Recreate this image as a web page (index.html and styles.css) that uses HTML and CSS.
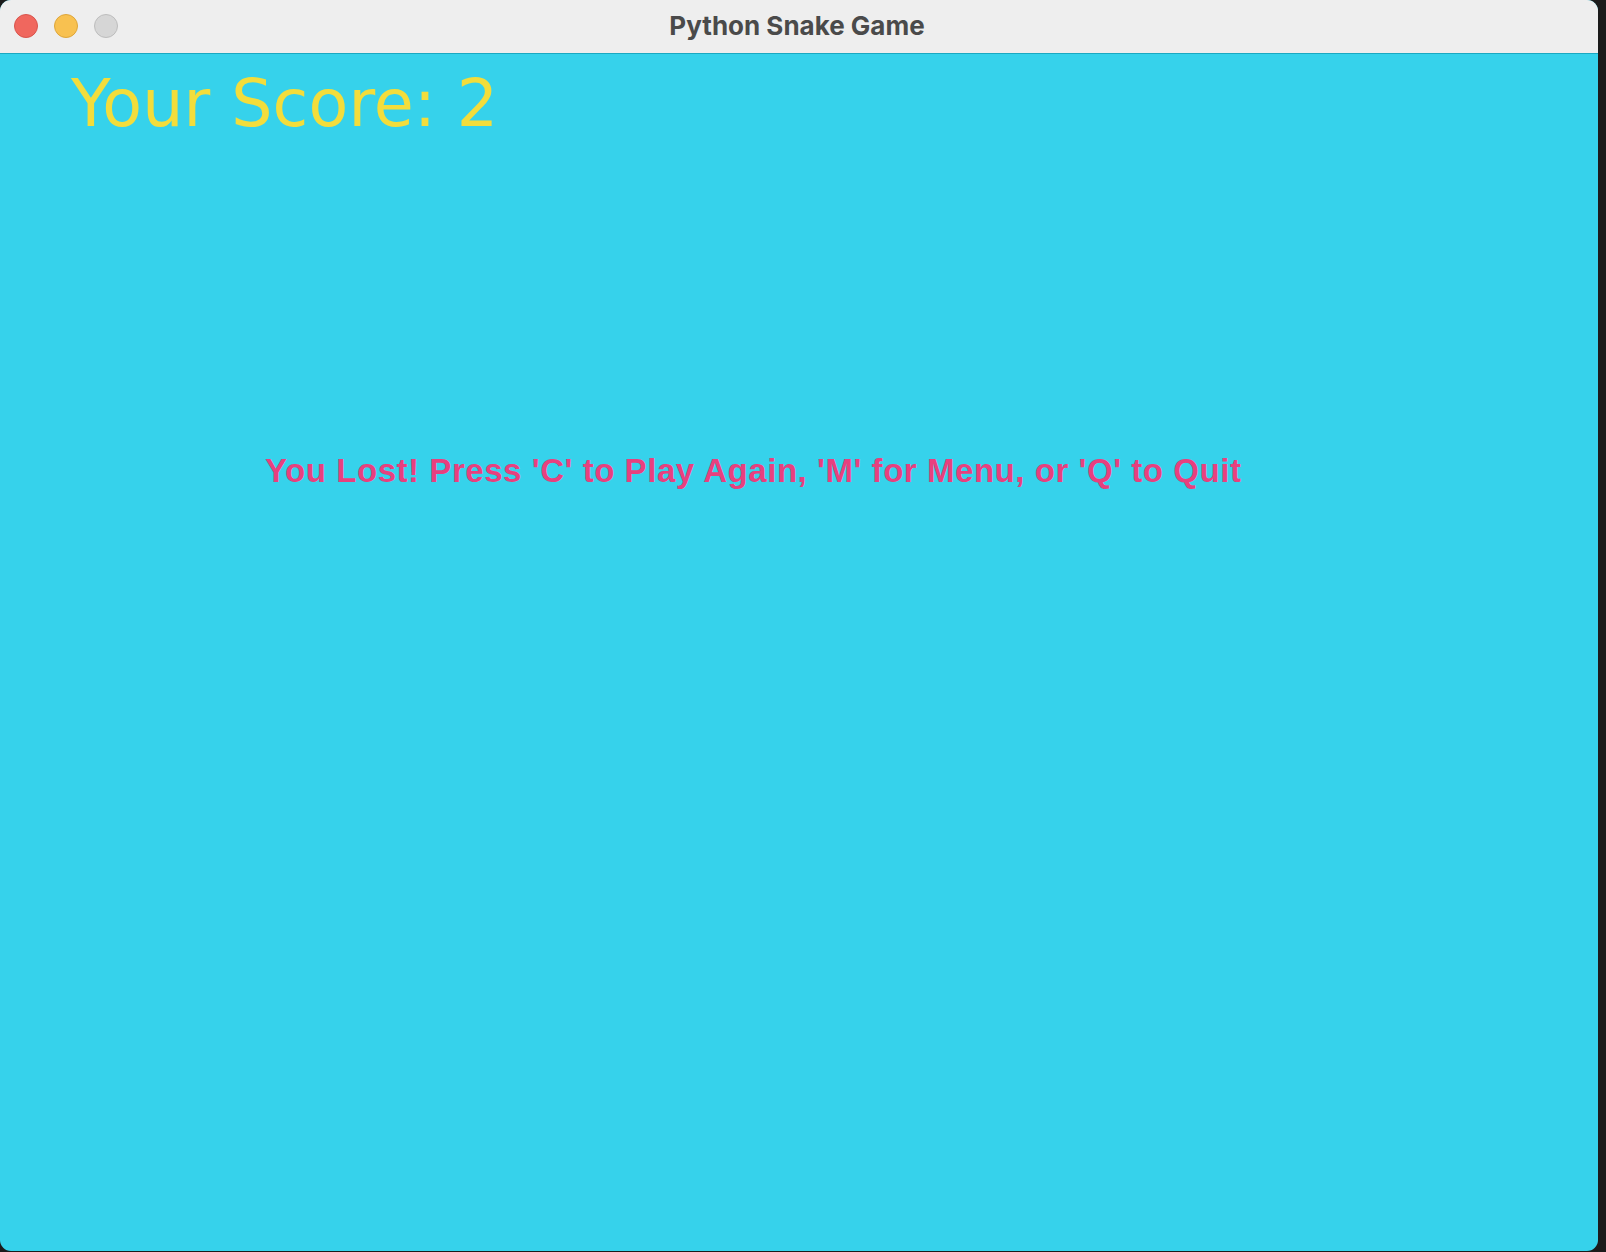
FILE: index.html
```html
<!DOCTYPE html>
<html>
<head>
<meta charset="utf-8">
<title>Python Snake Game</title>
<link rel="stylesheet" href="styles.css">
</head>
<body>
<div class="window">
  <div class="titlebar">
    <div class="lights">
      <span class="light red"></span>
      <span class="light yellow"></span>
      <span class="light gray"></span>
    </div>
    <div class="title">Python Snake Game</div>
  </div>
  <div class="game">
    <div class="score">Your Score: 2</div>
    <div class="message">You Lost! Press 'C' to Play Again, 'M' for Menu, or 'Q' to Quit</div>
  </div>
</div>
</body>
</html>
```
FILE: styles.css
```css
html, body {
  margin: 0;
  padding: 0;
  background: #1b1b1b;
  width: 1606px;
  height: 1252px;
  overflow: hidden;
}
.window {
  width: 1598px;
  height: 1251px;
  border-radius: 11px;
  overflow: hidden;
  background: #36d2eb;
  display: flex;
  flex-direction: column;
}
.titlebar {
  height: 53px;
  flex: none;
  background: #eeeeee;
  border-bottom: 1px solid #1ba9c2;
  position: relative;
  display: flex;
  align-items: center;
  justify-content: center;
}
.lights {
  position: absolute;
  left: 14px;
  top: 14px;
  display: flex;
  gap: 16px;
}
.light {
  width: 24px;
  height: 24px;
  border-radius: 50%;
  box-sizing: border-box;
  display: block;
}
.red { background: #f0675e; border: 1px solid #d9544c; }
.yellow { background: #f8c150; border: 1px solid #dea63a; }
.gray { background: #d6d6d6; border: 1px solid #bdbdbd; }
.title {
  font-family: Inter, "Liberation Sans", sans-serif;
  font-weight: 700;
  font-size: 26px;
  color: #4a4a4a;
  margin-top: -3px;
  margin-right: 4px;
}
.game {
  flex: 1;
  padding-left: 71px;
  position: relative;
}
.score {
  font-family: "DejaVu Sans", sans-serif;
  font-size: 65px;
  line-height: 66px;
  letter-spacing: 0.15px;
  color: #f3dd3b;
  margin-top: 17px;
}
.message {
  font-family: "Liberation Sans", Arial, sans-serif;
  font-weight: 700;
  font-size: 33px;
  line-height: 33px;
  letter-spacing: 0.55px;
  color: #e8407e;
  margin-top: 317px;
  margin-left: 194px;
}
```
